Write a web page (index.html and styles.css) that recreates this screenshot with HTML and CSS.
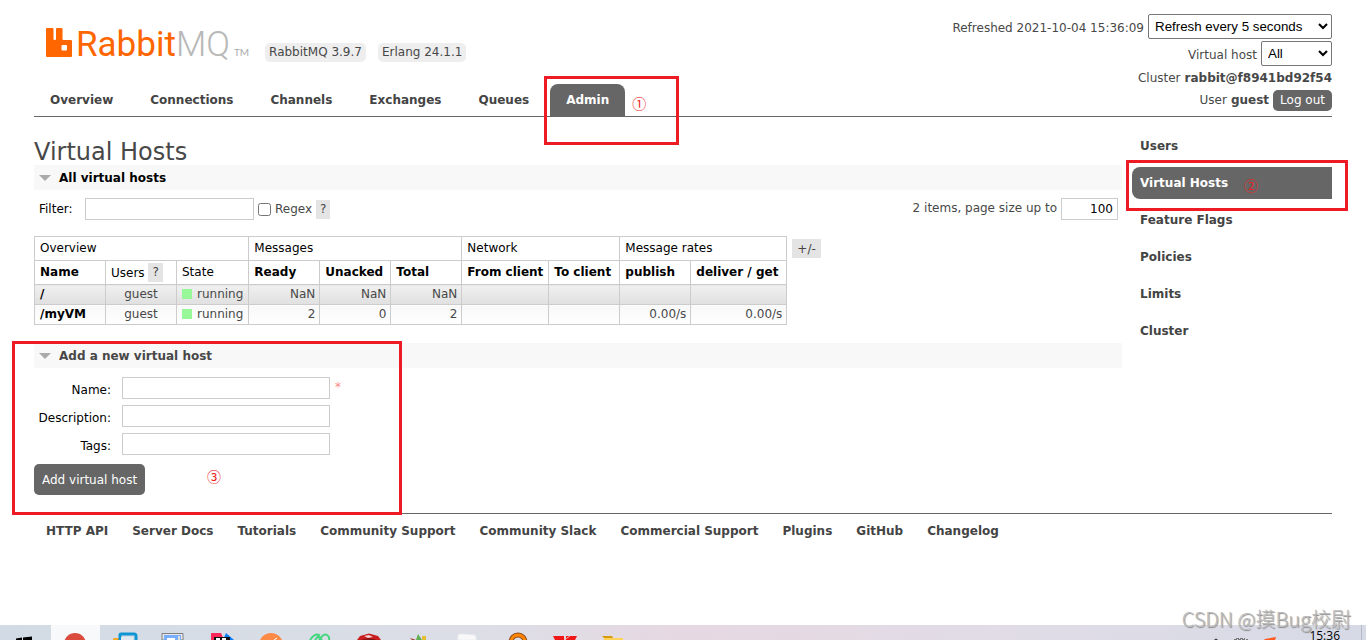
FILE: index.html
```html
<!DOCTYPE html>
<html lang="en">
<head>
  <meta charset="utf-8">
  <title>RabbitMQ Management</title>
  <link rel="stylesheet" href="styles.css">
</head>
<body>
  <div class="page">
    <header class="header">
      <div class="header-left">
        <div class="brand">
          <a href="#" class="logo" aria-label="RabbitMQ">
            <svg class="logo-mark" width="27" height="29" viewBox="0 0 27 29">
              <path fill="#ff6600" fill-rule="evenodd" d="M1 0h5.500a1 1 0 0 1 1 1v10a1 1 0 0 0 1 1h.5a1 1 0 0 0 1-1V1a1 1 0 0 1 1-1h4.500a1 1 0 0 1 1 1v10a1 1 0 0 0 1 1H25a1 1 0 0 1 1 1V28a1 1 0 0 1-1 1H1a1 1 0 0 1-1-1V1a1 1 0 0 1 1-1zM16.500 17a1 1 0 0 0-1 1v3.500a1 1 0 0 0 1 1H20a1 1 0 0 0 1-1V18a1 1 0 0 0-1-1z"/>
            </svg>
            <span class="logo-text">Rabbit<span class="logo-mq">MQ</span></span>
            <span class="logo-tm">TM</span>
          </a>
          <span class="version">RabbitMQ 3.9.7</span>
          <span class="version">Erlang 24.1.1</span>
        </div>
        <nav class="tabs">
          <a href="#">Overview</a>
          <a href="#">Connections</a>
          <a href="#">Channels</a>
          <a href="#">Exchanges</a>
          <a href="#">Queues</a>
          <a href="#" class="selected">Admin</a>
          <span class="mark mark-admin"><span class="mark-num">①</span></span>
        </nav>
      </div>
      <div class="status">
        <div class="status-row">
          <label for="update-every">Refreshed 2021-10-04 15:36:09</label>
          <select id="update-every" class="select-refresh">
            <option>Refresh every 5 seconds</option>
            <option>Refresh every 10 seconds</option>
            <option>Refresh every 30 seconds</option>
            <option>Do not refresh</option>
          </select>
        </div>
        <div class="status-row">
          <label for="show-vhost">Virtual host</label>
          <select id="show-vhost" class="select-vhost">
            <option>All</option>
            <option>/</option>
            <option>/myVM</option>
          </select>
        </div>
        <div class="status-row">Cluster <b>rabbit@f8941bd92f54</b></div>
        <div class="status-row user">User <b>guest</b> <button type="button" class="logout">Log out</button></div>
      </div>
    </header>

    <div class="columns">
      <main class="main">
        <h1>Virtual Hosts</h1>

        <section>
          <h2 class="section-title hovered">All virtual hosts</h2>
          <div class="filter">
            <label for="filter" class="filter-label">Filter:</label>
            <input type="text" id="filter" class="filter-input">
            <input type="checkbox" id="regex" class="regex">
            <label for="regex">Regex</label>
            <button type="button" class="help">?</button>
            <span class="paging">
              <label for="pagesize">2 items, page size up to</label>
              <input type="text" id="pagesize" class="pagesize" value="100">
            </span>
          </div>

          <div class="table-wrap">
            <table class="list">
              <thead>
                <tr class="groups">
                  <th colspan="3">Overview</th>
                  <th colspan="3">Messages</th>
                  <th colspan="2">Network</th>
                  <th colspan="2">Message rates</th>
                </tr>
                <tr>
                  <th>Name</th>
                  <th class="plain">Users <button type="button" class="help">?</button></th>
                  <th class="plain">State</th>
                  <th>Ready</th>
                  <th>Unacked</th>
                  <th>Total</th>
                  <th>From client</th>
                  <th>To client</th>
                  <th>publish</th>
                  <th class="wide">deliver / get</th>
                </tr>
              </thead>
              <tbody>
                <tr class="alt1">
                  <td><a href="#">/</a></td>
                  <td class="c">guest</td>
                  <td><span class="state">running</span></td>
                  <td class="r">NaN</td>
                  <td class="r">NaN</td>
                  <td class="r">NaN</td>
                  <td></td>
                  <td></td>
                  <td></td>
                  <td></td>
                </tr>
                <tr class="alt2">
                  <td><a href="#">/myVM</a></td>
                  <td class="c">guest</td>
                  <td><span class="state">running</span></td>
                  <td class="r">2</td>
                  <td class="r">0</td>
                  <td class="r">2</td>
                  <td></td>
                  <td></td>
                  <td class="r">0.00/s</td>
                  <td class="r">0.00/s</td>
                </tr>
              </tbody>
            </table>
            <button type="button" class="help plus-minus">+/-</button>
          </div>
        </section>

        <section class="add">
          <h2 class="section-title">Add a new virtual host</h2>
          <form>
            <div class="fields">
              <label for="name">Name:</label>
              <div><input type="text" id="name"><span class="mand">*</span></div>
              <label for="description">Description:</label>
              <div><input type="text" id="description"></div>
              <label for="tags">Tags:</label>
              <div><input type="text" id="tags"></div>
            </div>
            <button type="button" class="submit">Add virtual host</button>
          </form>
          <span class="mark mark-add"><span class="mark-num">③</span></span>
        </section>
      </main>

      <nav class="side">
        <a href="#">Users</a>
        <a href="#" class="selected">Virtual Hosts<span class="mark mark-side"><span class="mark-num">②</span></span></a>
        <a href="#">Feature Flags</a>
        <a href="#">Policies</a>
        <a href="#">Limits</a>
        <a href="#">Cluster</a>
      </nav>
    </div>

    <footer class="footer">
      <a href="#">HTTP API</a>
      <a href="#">Server Docs</a>
      <a href="#">Tutorials</a>
      <a href="#">Community Support</a>
      <a href="#">Community Slack</a>
      <a href="#">Commercial Support</a>
      <a href="#">Plugins</a>
      <a href="#">GitHub</a>
      <a href="#">Changelog</a>
    </footer>
  </div>

  <div class="taskbar">
    <svg class="start" viewBox="0 0 51 15"><path d="M16 13.500l6-1V15h-6zM23 12.400l9-1V15h-9z" fill="#000"/></svg>
    <svg class="active" viewBox="0 0 49 15"><circle cx="24" cy="19" r="11" fill="#db4c3f"/></svg>
    <svg viewBox="0 0 49 15"><path d="M13 15v-1q0-1 2-1h11v2z" fill="#f5a623"/><path d="M20 15v-5q0-1 1-1h13q2 0 2 2v4" fill="none" stroke="#0d96d4" stroke-width="3"/><path d="M21 12h12v3H21z" fill="#dfe9ef"/></svg>
    <svg viewBox="0 0 49 15"><path d="M13 8.500h21V15H13z" fill="#e8e8e8" stroke="#808080"/><path d="M15 10h17v5H15z" fill="#79aeff"/><path d="M18 13h8v2h-8z" fill="#fff"/><path d="M29 11h2v4h-2z" fill="#ddd"/></svg>
    <svg viewBox="0 0 49 15"><path d="M13 15V8h10l3 7z" fill="#ff2857"/><path d="M25 15l3-7 8 7z" fill="#087cfa"/><path d="M16 12h16v3H16z" fill="#111"/><path d="M18 14h4M24 14h4" stroke="#fff" stroke-width="2"/></svg>
    <svg viewBox="0 0 49 15"><circle cx="24" cy="20" r="12" fill="#ff8a45"/><path d="M27 15l3-2" stroke="#fff" stroke-width="1"/></svg>
    <svg viewBox="0 0 49 15"><path d="M14 15q5-7 9-5l-4 5M23 15q5-7 8-5t2 5M22 11l4 4" fill="none" stroke="#42d77d" stroke-width="2"/></svg>
    <svg viewBox="0 0 49 15"><path d="M12 15l3-4 9-2.500 9 2.500 3 4z" fill="#c91d1d"/><path d="M19 11l5-1 4 2-5 1z" fill="#fff" opacity=".8"/><path d="M16 15l8-2 8 2z" fill="#831414"/></svg>
    <svg viewBox="0 0 49 15"><path d="M22 15l2-6 4 6z" fill="#62ad50"/><path d="M16 13l6 2h-4z" fill="#a63225"/><path d="M28 11h4v4h-4z" fill="#e5bd35"/></svg>
    <svg viewBox="0 0 49 15"><path d="M15 15v-4q0-2 3-2l13 1q2 0 2 2v3z" fill="#f8f8f8" stroke="#eceef2"/></svg>
    <svg viewBox="0 0 49 15"><circle cx="26" cy="17" r="7" fill="none" stroke="#8b4b15" stroke-width="5"/><circle cx="26" cy="17" r="7" fill="none" stroke="#ff8500" stroke-width="3"/></svg>
    <svg viewBox="0 0 49 15"><path d="M12 11h11v4h-9zM25 11h11l-2 4h-9z" fill="#f11717"/><path d="M23 15l6-4" stroke="#ffb0a0" stroke-width="1"/></svg>
    <svg viewBox="0 0 49 15"><path d="M12 11h10l1 2h-9z" fill="#d79a0a"/><path d="M14 13h19v2H14z" fill="#ffd35a"/></svg>
    <div class="tray">
      <svg viewBox="0 0 80 15"><path d="M9 15l2-1.500 2 1.500z" fill="#333"/><path d="M29 14.500h14M31 13.500h9" stroke="#777" stroke-dasharray="3 1"/><path d="M59 15l1-1 11-2-1 3z" fill="#ff5a1f"/></svg>
      <span class="clock">15:36</span>
    </div>
  </div>
  <div class="watermark">CSDN @摸Bug校尉</div>
</body>
</html>
```
FILE: styles.css
```css
* {
  box-sizing: border-box;
}

body {
  margin: 0;
  min-height: 100vh;
  display: flex;
  flex-direction: column;
  position: relative;
  background: #fff;
  color: #484848;
  font-family: Verdana, "DejaVu Sans", sans-serif;
  font-size: 12px;
  line-height: 20px;
}

a {
  color: #444;
  font-weight: bold;
  text-decoration: none;
}

button, input {
  font-family: inherit;
  font-size: 12px;
}

input[type="text"] {
  height: 22px;
  padding: 0 4px;
  border: 1px solid #ccc;
  background: #fff;
}

.page {
  padding: 0 34px;
}

/* header */
.header {
  display: flex;
  justify-content: space-between;
  align-items: flex-end;
  padding-top: 14px;
  border-bottom: 1px solid #666;
}

.brand {
  display: flex;
  align-items: flex-end;
  gap: 12px;
  padding: 0 0 22px 12px;
}

.logo {
  display: flex;
  align-items: flex-end;
  margin: 0 4px 5px 0;
  color: #f60;
  font-weight: normal;
}

.logo-mark {
  display: block;
  margin-right: 3px;
}

.logo-text {
  font-family: Roboto, sans-serif;
  font-size: 35px;
  line-height: 25px;
}

.logo-mq {
  color: #b8b8b8;
  font-weight: 300;
}

.logo-tm {
  margin-left: 4px;
  color: #aaa;
  font-family: Lato, sans-serif;
  font-size: 10px;
  line-height: 10px;
}

.version {
  padding: 0 4px;
  border-radius: 5px;
  background: #eee;
  line-height: 19px;
}

.tabs {
  display: flex;
  gap: 5px;
  position: relative;
}

.tabs a {
  padding: 6px 16px;
}

.tabs .selected {
  border-radius: 8px 8px 0 0;
  background: #666;
  color: #fff;
}

.status {
  padding-bottom: 4px;
}

.status-row {
  display: flex;
  justify-content: flex-end;
  align-items: center;
  gap: 4px;
}

.user {
  height: 24px;
}

.status select {
  height: 25px;
  margin-bottom: 2px;
  padding: 0 2px;
  border: 1px solid #767676;
  border-radius: 2px;
  background: #fff;
  color: #000;
  font-family: "Liberation Sans", Arial, sans-serif;
}

.select-refresh {
  width: 184px;
}

.select-vhost {
  width: 71px;
}

.logout {
  height: 21px;
  padding: 0 7px;
  border: none;
  border-radius: 5px;
  background: #666;
  color: #fff;
}

/* content */
.columns {
  display: flex;
  gap: 10px;
  padding-top: 13px;
}

.main {
  flex: 1;
}

h1 {
  margin: 9px 0 0;
  font-size: 24px;
  font-weight: normal;
  line-height: 26px;
}

.section-title {
  display: flex;
  align-items: center;
  height: 25px;
  margin: 0;
  padding-left: 5px;
  background: #f8f8f8;
  font-size: 12px;
}

.section-title::before {
  content: "";
  margin-right: 8px;
  border: 6px solid transparent;
  border-top-color: #aaa;
  border-bottom: none;
}

.hovered {
  color: #000;
}

.filter {
  display: flex;
  align-items: center;
  gap: 4px;
  padding: 8px 4px 16px 5px;
}

.filter-label {
  width: 42px;
  color: #000;
}

.filter-input {
  width: 169px;
}

.regex {
  width: 13px;
  height: 13px;
  margin: 0;
}

.paging {
  display: flex;
  gap: 4px;
  margin-left: auto;
}

.pagesize {
  width: 57px;
  text-align: right;
}

.help {
  height: 19px;
  padding: 0 4px;
  border: none;
  background: #e4e4e4;
  color: #444;
}

.table-wrap {
  display: flex;
  align-items: flex-start;
  gap: 5px;
}

.plus-minus {
  margin-top: 3px;
  padding: 0 5px;
}

.list {
  border-collapse: collapse;
}

.list th,
.list td {
  height: 20px;
  min-width: 71px;
  padding: 0 5px;
  border: 1px solid #ccc;
  line-height: 19px;
  text-align: left;
  white-space: nowrap;
}

.list th {
  height: 24px;
  color: #000;
}

.list .wide {
  min-width: 96px;
}

.list .groups th,
.list .plain {
  font-weight: normal;
}

.list td a {
  color: #000;
}

.list .c {
  text-align: center;
}

.list .r {
  padding-right: 4px;
  text-align: right;
}

.alt1 td {
  background: linear-gradient(#f0f0f0, #e0e0e0);
}

.alt2 td {
  background: linear-gradient(#f8f8f8, #fff);
}

.state::before {
  content: "";
  display: inline-block;
  width: 10px;
  height: 10px;
  margin-right: 5px;
  background: #98f898;
  vertical-align: -1px;
}

.add {
  position: relative;
  margin-top: 18px;
}

.fields {
  display: grid;
  grid-template-columns: 77px 1fr;
  gap: 6px 11px;
  padding: 9px 0;
}

.fields label {
  padding-top: 4px;
  color: #000;
  line-height: 18px;
  text-align: right;
}

.fields div {
  display: flex;
  height: 22px;
}

.fields input {
  width: 208px;
}

.mand {
  margin-left: 5px;
  color: #f88;
}

.submit {
  height: 31px;
  padding: 0 8px;
  border: none;
  border-radius: 5px;
  background: #666;
  color: #fff;
}

.side {
  display: flex;
  flex-direction: column;
  gap: 5px;
  width: 200px;
}

.side a {
  position: relative;
  padding: 6px 8px;
}

.side .selected {
  border-radius: 8px 0 0 8px;
  background: #666;
  color: #fff;
}

/* footer */
.footer {
  display: flex;
  flex-wrap: wrap;
  gap: 24px;
  margin-top: 18px;
  padding: 7px 12px;
  border-top: 1px solid #666;
}

/* numbered red frames */
.mark {
  position: absolute;
  border: 3px solid #ed1c24;
  color: #ed1c24;
  font-family: "Noto Sans CJK SC", sans-serif;
  font-size: 14px;
  font-weight: normal;
  pointer-events: none;
}

.mark-num {
  position: absolute;
}

.mark-admin {
  right: -54px;
  top: -8px;
  width: 135px;
  height: 69px;
}

.mark-admin .mark-num {
  left: 85px;
  top: 14px;
}

.mark-side {
  left: -6px;
  right: -16px;
  top: -7px;
  height: 51px;
}

.mark-side .mark-num {
  left: 115px;
  top: 12px;
}

.mark-add {
  left: -22px;
  top: -2px;
  width: 390px;
  height: 174px;
}

.mark-add .mark-num {
  left: 192px;
  top: 122px;
}

/* desktop taskbar */
.taskbar {
  display: flex;
  height: 15px;
  margin-top: auto;
  overflow: hidden;
  background: linear-gradient(90deg, #d2dbe5, #dcdee6 35%, #e6d8e2 50%, #e0dce6 75%, #d6dae6);
}

.taskbar svg {
  flex: none;
  width: 49px;
  height: 15px;
}

.taskbar .start {
  width: 51px;
}

.taskbar .active {
  background: #f8f9fb;
}

.tray {
  display: flex;
  gap: 24px;
  margin-left: auto;
  margin-right: 4px;
  padding-right: 21px;
  border-right: 1px solid #b4bac6;
}

.tray svg {
  width: 80px;
}

.clock {
  color: #000;
  font-family: "Open Sans", sans-serif;
  line-height: 22px;
}

.watermark {
  position: absolute;
  right: 15px;
  bottom: 10px;
  color: #bbb;
  font-family: "Noto Sans CJK SC", sans-serif;
  font-size: 20px;
  font-weight: 300;
  line-height: 22px;
  text-shadow: 1px 1px 1px #888;
}
```
